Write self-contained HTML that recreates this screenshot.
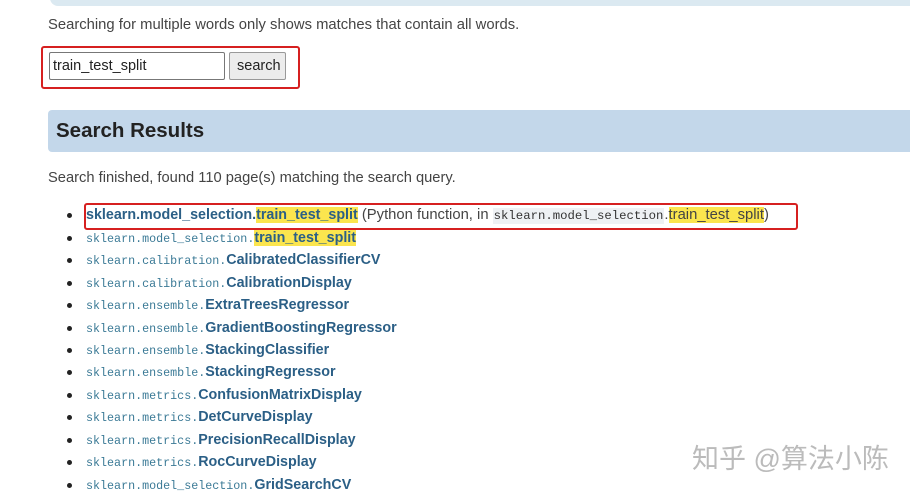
<!DOCTYPE html>
<html><head><meta charset="utf-8"><style>
*{margin:0;padding:0;box-sizing:border-box}
body{width:910px;height:495px;overflow:hidden;background:#fff;font-family:"Liberation Sans",sans-serif;color:#333;position:relative}
.abs{position:absolute;white-space:nowrap}
.m{font-family:"Liberation Mono",monospace;font-size:11.7px;color:#3b7a96}
.b{font-weight:bold;font-size:14.3px;color:#2b5f86}
.hl{background:#fbe54e}
.dot{position:absolute;left:67px;width:5px;height:5px;border-radius:50%;background:#222}
</style></head><body>
<div class="abs" style="left:50px;top:-20px;width:870px;height:26px;background:#dbe9f1;border-radius:8px"></div>
<div class="abs" style="left:48px;top:17px;font-size:14.8px;color:#444">Searching for multiple words only shows matches that contain all words.</div>
<div class="abs" style="left:41px;top:46px;width:259px;height:43px;border:2.5px solid #d62020;border-radius:3px"></div>
<div class="abs" style="left:49px;top:52px;width:176px;height:28px;border:1px solid #777;border-radius:2px;font-size:14.5px;padding:5px 3px;color:#222">train_test_split</div>
<div class="abs" style="left:229px;top:52px;width:57px;height:28px;border:1px solid #999;border-radius:2px;background:#ececec;font-size:14.5px;padding:5px 7px;color:#222">search</div>
<div class="abs" style="left:48px;top:110px;width:870px;height:42px;background:#c3d7ea;border-radius:4px"></div>
<div class="abs" style="left:56px;top:119px;font-size:20.5px;font-weight:bold;color:#222">Search Results</div>
<div class="abs" style="left:48px;top:170px;font-size:14.7px;color:#444">Search finished, found 110 page(s) matching the search query.</div>
<div class="abs" style="left:84px;top:203px;width:714px;height:27px;border:2.5px solid #d62020;border-radius:3px"></div>

<div class="dot" style="top:213px"></div>
<div class="abs" style="left:86px;top:207px;font-size:14.8px;color:#444"><span class="b">sklearn.model_selection.<span class="hl">train_test_split</span></span> (Python function, in <span class="m" style="background:#eef1f4;color:#333;padding:1px 1px;font-size:12.3px">sklearn.model_selection</span>.<span class="hl">train_test_split</span>)</div>

<div class="dot" style="top:236px"></div>
<div class="abs" style="left:86px;top:229px"><span class="m">sklearn.model_selection.</span><span class="b hl">train_test_split</span></div>
<div class="dot" style="top:258px"></div>
<div class="abs" style="left:86px;top:251px"><span class="m">sklearn.calibration.</span><span class="b">CalibratedClassifierCV</span></div>
<div class="dot" style="top:281px"></div>
<div class="abs" style="left:86px;top:274px"><span class="m">sklearn.calibration.</span><span class="b">CalibrationDisplay</span></div>
<div class="dot" style="top:303px"></div>
<div class="abs" style="left:86px;top:296px"><span class="m">sklearn.ensemble.</span><span class="b">ExtraTreesRegressor</span></div>
<div class="dot" style="top:326px"></div>
<div class="abs" style="left:86px;top:319px"><span class="m">sklearn.ensemble.</span><span class="b">GradientBoostingRegressor</span></div>
<div class="dot" style="top:348px"></div>
<div class="abs" style="left:86px;top:341px"><span class="m">sklearn.ensemble.</span><span class="b">StackingClassifier</span></div>
<div class="dot" style="top:370px"></div>
<div class="abs" style="left:86px;top:363px"><span class="m">sklearn.ensemble.</span><span class="b">StackingRegressor</span></div>
<div class="dot" style="top:393px"></div>
<div class="abs" style="left:86px;top:386px"><span class="m">sklearn.metrics.</span><span class="b">ConfusionMatrixDisplay</span></div>
<div class="dot" style="top:415px"></div>
<div class="abs" style="left:86px;top:408px"><span class="m">sklearn.metrics.</span><span class="b">DetCurveDisplay</span></div>
<div class="dot" style="top:438px"></div>
<div class="abs" style="left:86px;top:431px"><span class="m">sklearn.metrics.</span><span class="b">PrecisionRecallDisplay</span></div>
<div class="dot" style="top:460px"></div>
<div class="abs" style="left:86px;top:453px"><span class="m">sklearn.metrics.</span><span class="b">RocCurveDisplay</span></div>
<div class="dot" style="top:483px"></div>
<div class="abs" style="left:86px;top:476px"><span class="m">sklearn.model_selection.</span><span class="b">GridSearchCV</span></div>

<div class="abs" style="left:692px;top:437px;font-size:27px;color:#bbb;font-family:'Liberation Sans','Noto Sans CJK SC',sans-serif">知乎 @算法小陈</div>
</body></html>
